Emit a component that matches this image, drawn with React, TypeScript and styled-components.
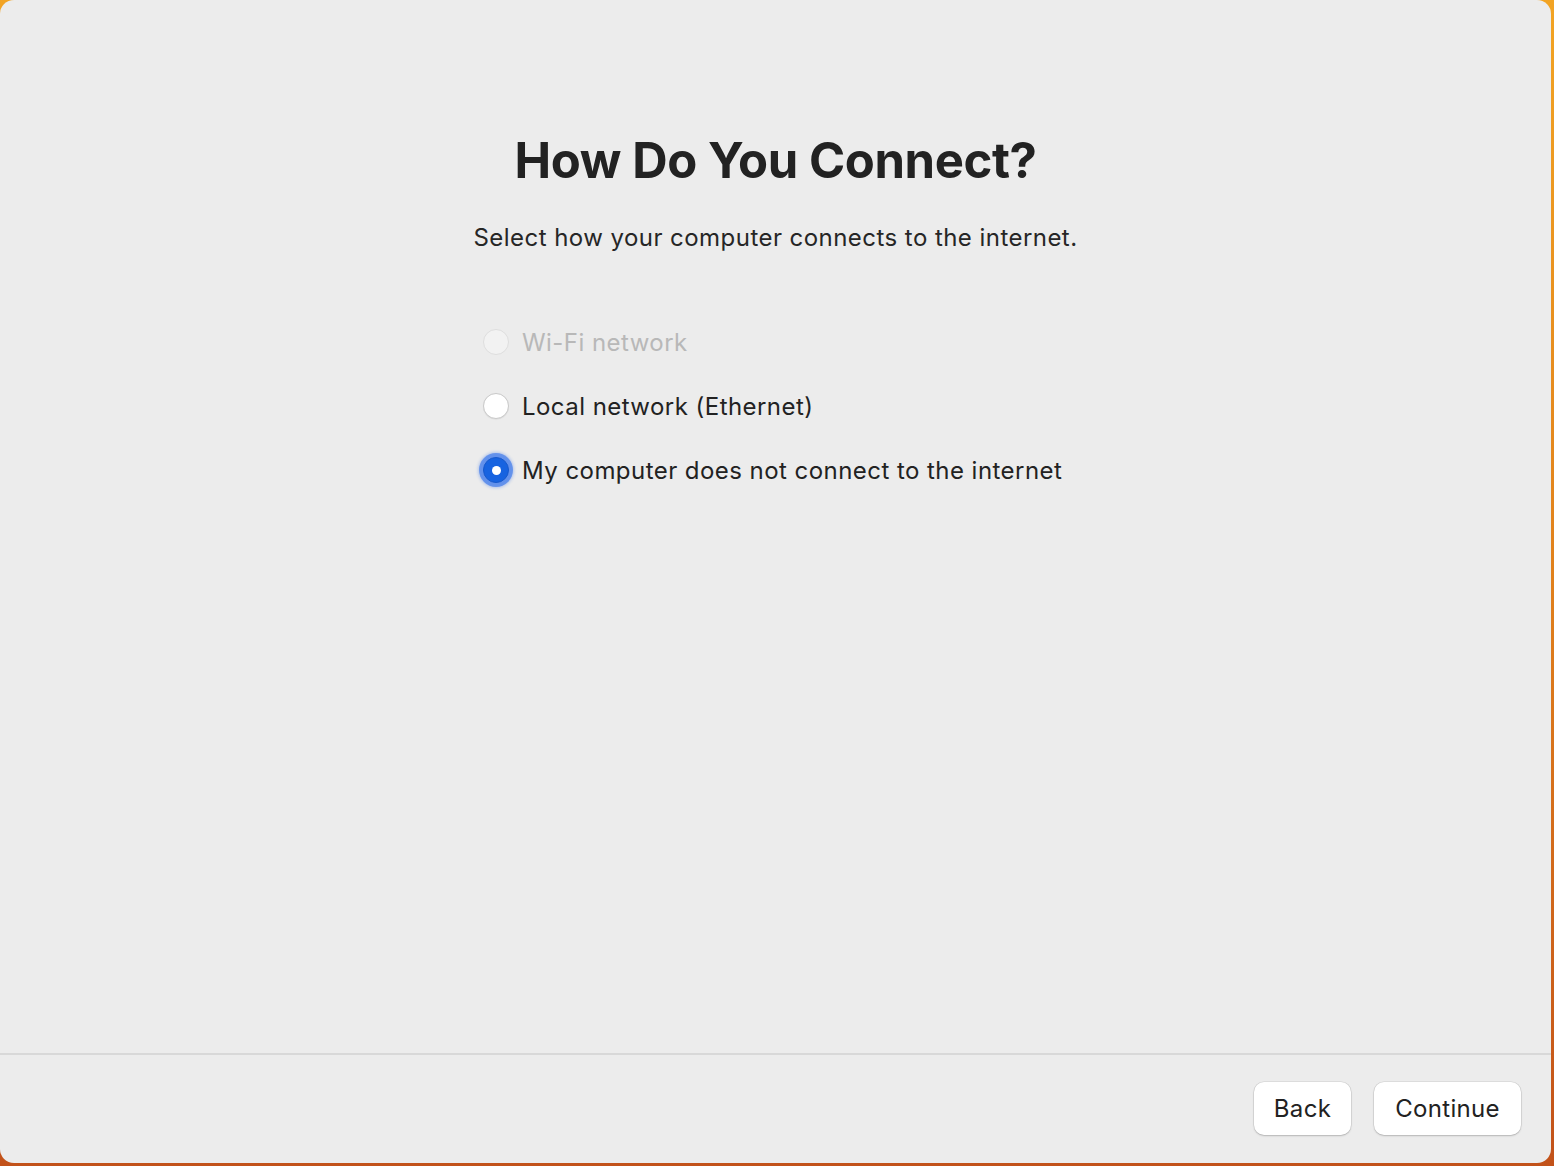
import React, { useState } from 'react';
import styled, { createGlobalStyle, css } from 'styled-components';

const GlobalStyle = createGlobalStyle`
  html, body {
    margin: 0;
    padding: 0;
    height: 100%;
  }
  body {
    background: linear-gradient(180deg, #f2a424 0%, #e0801c 50%, #c2521a 100%);
    font-family: Inter, "Noto Sans", "Liberation Sans", sans-serif;
    overflow: hidden;
  }
  #root {
    height: 100%;
  }
`;

const Window = styled.div`
  width: 1551px;
  height: 1163px;
  background: #ececec;
  border-radius: 14px;
  display: flex;
  flex-direction: column;
  overflow: hidden;
`;

const Content = styled.main`
  flex: 1;
  display: flex;
  flex-direction: column;
  align-items: center;
  padding-top: 130px;
`;

const Title = styled.h1`
  margin: 0;
  font-size: 49px;
  line-height: 62px;
  font-weight: 700;
  color: #222;
  letter-spacing: -0.4px;
`;

const Subtitle = styled.p`
  margin: 32px 0 0;
  font-size: 24px;
  line-height: 28px;
  letter-spacing: 0.45px;
  color: #262626;
`;

const Options = styled.div`
  margin-top: 76px;
  align-self: stretch;
  display: flex;
  flex-direction: column;
  gap: 36px;
  padding-left: 483px;
`;

const Option = styled.label<{ $disabled?: boolean }>`
  display: flex;
  align-items: center;
  gap: 13px;
  height: 28px;
  font-size: 24px;
  letter-spacing: 0.45px;
  color: ${p => (p.$disabled ? '#b8b8b8' : '#222')};
  cursor: ${p => (p.$disabled ? 'default' : 'pointer')};
`;

const Radio = styled.span<{ $checked?: boolean; $disabled?: boolean }>`
  box-sizing: border-box;
  width: 26px;
  height: 26px;
  border-radius: 50%;
  flex-shrink: 0;
  display: flex;
  align-items: center;
  justify-content: center;
  background: #fff;
  border: 1px solid #c9c9c9;
  box-shadow: 0 0.5px 1px rgba(0, 0, 0, 0.08);

  ${p =>
    p.$disabled &&
    css`
      background: #f2f2f2;
      border-color: #dedede;
      box-shadow: none;
    `}

  ${p =>
    p.$checked &&
    css`
      background: #1763e0;
      border-color: #1558cc;
      box-shadow: 0 0 0 4px rgba(45, 110, 235, 0.6), 0 0 3px 5px rgba(45, 110, 235, 0.3);
      &::after {
        content: '';
        width: 9px;
        height: 9px;
        border-radius: 50%;
        background: #fff;
      }
    `}
`;

const Footer = styled.footer`
  height: 110px;
  border-top: 2px solid #d8d8d8;
  box-sizing: border-box;
  display: flex;
  align-items: center;
  justify-content: flex-end;
  gap: 23px;
  padding: 0 30px 2px 0;
`;

const Button = styled.button<{ $width: number }>`
  width: ${p => p.$width}px;
  height: 53px;
  border: none;
  border-radius: 10px;
  background: #fff;
  box-shadow: 0 0 0 0.5px rgba(0, 0, 0, 0.12), 0 1px 2px rgba(0, 0, 0, 0.18);
  font-family: inherit;
  font-size: 24px;
  letter-spacing: 0.3px;
  color: #222;
  cursor: pointer;
`;

const options = [
  { id: 'wifi', label: 'Wi-Fi network', disabled: true },
  { id: 'ethernet', label: 'Local network (Ethernet)' },
  { id: 'none', label: 'My computer does not connect to the internet' },
];

export default function App() {
  const [selected, setSelected] = useState('none');

  return (
    <>
      <GlobalStyle />
      <Window>
        <Content>
          <Title>How Do You Connect?</Title>
          <Subtitle>Select how your computer connects to the internet.</Subtitle>
          <Options>
            {options.map(o => (
              <Option
                key={o.id}
                $disabled={o.disabled}
                onClick={() => !o.disabled && setSelected(o.id)}
              >
                <Radio $checked={selected === o.id} $disabled={o.disabled} />
                {o.label}
              </Option>
            ))}
          </Options>
        </Content>
        <Footer>
          <Button $width={97}>Back</Button>
          <Button $width={147}>Continue</Button>
        </Footer>
      </Window>
    </>
  );
}
